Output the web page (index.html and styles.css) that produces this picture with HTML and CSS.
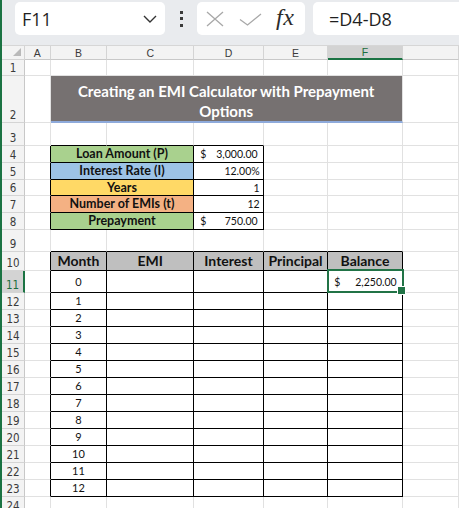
FILE: index.html
```html
<!DOCTYPE html>
<html>
<head>
<meta charset="utf-8">
<link rel="stylesheet" href="styles.css">
</head>
<body>
<div class="app">
  <div class="topbar">
    <div class="namebox">
      <span class="namebox-text">F11</span>
      <svg class="chev" width="14" height="8" viewBox="0 0 14 8"><path d="M1 1 L7 7 L13 1" fill="none" stroke="#333" stroke-width="1.4"/></svg>
    </div>
    <div class="dots"><i></i><i></i><i></i></div>
    <div class="fbtns">
      <svg class="xicon" width="18" height="16" viewBox="0 0 18 16"><path d="M1 1 L17 15 M17 1 L1 15" stroke="#a8a8a8" stroke-width="1.3" fill="none"/></svg>
      <svg class="check" width="23" height="13" viewBox="0 0 23 13"><path d="M1 6.5 L8.5 12 L22 1" stroke="#a8a8a8" stroke-width="1.3" fill="none"/></svg>
      <span class="fx">fx</span>
    </div>
    <div class="formula">=D4-D8</div>
  </div>

  <div class="sheet">
    <!-- column headers -->
    <div class="corner"><svg width="8" height="8" viewBox="0 0 8 8"><path d="M8 0 L8 8 L0 8 Z" fill="#b9b9b9"/></svg></div>
    <div class="ch">A</div>
    <div class="ch">B</div>
    <div class="ch">C</div>
    <div class="ch">D</div>
    <div class="ch">E</div>
    <div class="ch ch-sel">F</div>
    <div class="ch"></div>

    <!-- row 1 -->
    <div class="rh">1</div>
    <div class="c"></div><div class="c"></div><div class="c"></div><div class="c"></div><div class="c"></div><div class="c"></div><div class="c"></div>

    <!-- row 2 -->
    <div class="rh">2</div>
    <div class="c"></div>
    <div class="c title">Creating an EMI Calculator with Prepayment Options</div>
    <div class="c"></div>

    <!-- row 3 -->
    <div class="rh">3</div>
    <div class="c"></div>
    <div class="c bb"></div><div class="c bb"></div><div class="c bb"></div>
    <div class="c"></div><div class="c"></div><div class="c"></div>

    <!-- row 4 -->
    <div class="rh">4</div>
    <div class="c rb"></div>
    <div class="c tb lbl green">Loan Amount (P)</div>
    <div class="c tb val acc"><span>$</span><span>3,000.00</span></div>
    <div class="c"></div><div class="c"></div><div class="c"></div>

    <!-- row 5 -->
    <div class="rh">5</div>
    <div class="c rb"></div>
    <div class="c tb lbl blue">Interest Rate (I)</div>
    <div class="c tb val num">12.00%</div>
    <div class="c"></div><div class="c"></div><div class="c"></div>

    <!-- row 6 -->
    <div class="rh">6</div>
    <div class="c rb"></div>
    <div class="c tb lbl yellow">Years</div>
    <div class="c tb val num">1</div>
    <div class="c"></div><div class="c"></div><div class="c"></div>

    <!-- row 7 -->
    <div class="rh">7</div>
    <div class="c rb"></div>
    <div class="c tb lbl orange">Number of EMIs (t)</div>
    <div class="c tb val num">12</div>
    <div class="c"></div><div class="c"></div><div class="c"></div>

    <!-- row 8 -->
    <div class="rh">8</div>
    <div class="c rb"></div>
    <div class="c tb lbl green">Prepayment</div>
    <div class="c tb val acc"><span>$</span><span>750.00</span></div>
    <div class="c"></div><div class="c"></div><div class="c"></div>

    <!-- row 9 -->
    <div class="rh">9</div>
    <div class="c"></div>
    <div class="c bb"></div><div class="c bb"></div><div class="c bb"></div><div class="c bb"></div><div class="c bb"></div>
    <div class="c"></div>

    <!-- row 10 -->
    <div class="rh">10</div>
    <div class="c rb"></div>
    <div class="c tb hdr">Month</div>
    <div class="c tb hdr">EMI</div>
    <div class="c tb hdr">Interest</div>
    <div class="c tb hdr">Principal</div>
    <div class="c tb hdr">Balance</div>
    <div class="c"></div>

    <!-- row 11 -->
    <div class="rh rh-sel">11</div>
    <div class="c rb"></div>
    <div class="c tb mon">0</div>
    <div class="c tb"></div><div class="c tb"></div><div class="c tb"></div>
    <div class="c tb val acc sel"><span>$</span><span>2,250.00</span></div>
    <div class="c"></div>

    <!-- rows 12-23 -->
    <div class="rh">12</div><div class="c rb"></div><div class="c tb mon">1</div><div class="c tb"></div><div class="c tb"></div><div class="c tb"></div><div class="c tb"></div><div class="c"></div>
    <div class="rh">13</div><div class="c rb"></div><div class="c tb mon">2</div><div class="c tb"></div><div class="c tb"></div><div class="c tb"></div><div class="c tb"></div><div class="c"></div>
    <div class="rh">14</div><div class="c rb"></div><div class="c tb mon">3</div><div class="c tb"></div><div class="c tb"></div><div class="c tb"></div><div class="c tb"></div><div class="c"></div>
    <div class="rh">15</div><div class="c rb"></div><div class="c tb mon">4</div><div class="c tb"></div><div class="c tb"></div><div class="c tb"></div><div class="c tb"></div><div class="c"></div>
    <div class="rh">16</div><div class="c rb"></div><div class="c tb mon">5</div><div class="c tb"></div><div class="c tb"></div><div class="c tb"></div><div class="c tb"></div><div class="c"></div>
    <div class="rh">17</div><div class="c rb"></div><div class="c tb mon">6</div><div class="c tb"></div><div class="c tb"></div><div class="c tb"></div><div class="c tb"></div><div class="c"></div>
    <div class="rh">18</div><div class="c rb"></div><div class="c tb mon">7</div><div class="c tb"></div><div class="c tb"></div><div class="c tb"></div><div class="c tb"></div><div class="c"></div>
    <div class="rh">19</div><div class="c rb"></div><div class="c tb mon">8</div><div class="c tb"></div><div class="c tb"></div><div class="c tb"></div><div class="c tb"></div><div class="c"></div>
    <div class="rh">20</div><div class="c rb"></div><div class="c tb mon">9</div><div class="c tb"></div><div class="c tb"></div><div class="c tb"></div><div class="c tb"></div><div class="c"></div>
    <div class="rh">21</div><div class="c rb"></div><div class="c tb mon">10</div><div class="c tb"></div><div class="c tb"></div><div class="c tb"></div><div class="c tb"></div><div class="c"></div>
    <div class="rh">22</div><div class="c rb"></div><div class="c tb mon">11</div><div class="c tb"></div><div class="c tb"></div><div class="c tb"></div><div class="c tb"></div><div class="c"></div>
    <div class="rh">23</div><div class="c rb"></div><div class="c tb mon">12</div><div class="c tb"></div><div class="c tb"></div><div class="c tb"></div><div class="c tb"></div><div class="c"></div>

    <!-- row 24 -->
    <div class="rh">24</div>
    <div class="c"></div><div class="c"></div><div class="c"></div><div class="c"></div><div class="c"></div><div class="c"></div><div class="c"></div>
  </div>
</div>
</body>
</html>
```

FILE: styles.css
```css
* { box-sizing: border-box; }

html, body {
  margin: 0;
  padding: 0;
  background: #ffffff;
}

body {
  width: 459px;
  height: 508px;
  overflow: hidden;
  font-family: "Lato", "Liberation Sans", sans-serif;
}

.app {
  border-left: 2px solid #1b7343;
  height: 508px;
  overflow: hidden;
}

/* ---------- formula bar ---------- */
.topbar {
  height: 46px;
  background: #e9ebee;
  display: flex;
  align-items: flex-start;
  padding: 2px 0 0 13px;
  border-bottom: 1px solid #d6d6d6;
}

.namebox {
  width: 150px;
  height: 33px;
  background: #ffffff;
  border-radius: 5px;
  display: flex;
  align-items: center;
  justify-content: space-between;
  padding: 0 8px 0 7px;
}

.namebox-text,
.formula {
  font-family: "Open Sans", "Liberation Sans", sans-serif;
  font-size: 18px;
  color: #1f1f1f;
}

.chev { display: block; }

.dots {
  width: 32px;
  height: 33px;
  display: flex;
  flex-direction: column;
  align-items: center;
  justify-content: center;
  gap: 3.5px;
}

.dots i {
  display: block;
  width: 3px;
  height: 3px;
  background: #3a3a3a;
}

.fbtns {
  width: 108px;
  height: 33px;
  background: #ffffff;
  border-radius: 5px;
  display: flex;
  align-items: center;
  padding-left: 9px;
}

.xicon { display: block; margin-right: 15px; }
.check { display: block; margin-right: 14px; margin-top: 1px; }

.fx {
  font-family: "Liberation Serif", "DejaVu Serif", serif;
  font-style: italic;
  font-size: 24px;
  color: #2b2b2b;
  line-height: 1;
  margin-top: -3px;
  letter-spacing: 0.5px;
}

.formula {
  margin-left: 8px;
  flex: 1;
  height: 33px;
  background: #ffffff;
  border-radius: 5px 0 0 5px;
  display: flex;
  align-items: center;
  padding-left: 16px;
  margin-right: -20px;
}

/* ---------- sheet grid ---------- */
.sheet {
  display: grid;
  grid-template-columns: 23px 25.7px 56.6px 87px 69.4px 64.6px 74.4px 1fr;
  grid-template-rows: 14px 16px 47px 23px 17px 17px 16px 17px 17px 22px 19px 22px repeat(13, 17px);
}

.corner {
  background: #f3f3f3;
  border-right: 1px solid #d4d4d4;
  border-bottom: 1px solid #d4d4d4;
  display: flex;
  align-items: flex-end;
  justify-content: flex-end;
  padding: 0 3px 3px 0;
}
.corner svg { display: block; }

.ch {
  background: #f3f3f3;
  border-right: 1px solid #d4d4d4;
  border-bottom: 1px solid #c8c8c8;
  display: flex;
  align-items: center;
  justify-content: center;
  font-family: "Liberation Sans", "Open Sans", sans-serif;
  font-size: 10.5px;
  color: #3b3b3b;
}

.ch-sel {
  background: #d3d3d3;
  color: #1b6e3e;
  border-bottom: 2px solid #1b7343;
}

.rh {
  background: #f3f3f3;
  border-right: 1px solid #c8c8c8;
  border-bottom: 1px solid #d4d4d4;
  display: flex;
  align-items: flex-end;
  justify-content: center;
  font-family: "Liberation Sans Narrow", "DejaVu Sans Condensed", "Liberation Sans", sans-serif;
  font-size: 11.5px;
  line-height: 12px;
  padding-bottom: 1px;
  color: #3b3b3b;
}

.rh-sel {
  background: #d3d3d3;
  color: #1b6e3e;
  border-right: 2px solid #1b7343;
}

.c {
  border-right: 1px solid #e1e1e1;
  border-bottom: 1px solid #e1e1e1;
  display: flex;
  align-items: center;
  min-width: 0;
  font-size: 11px;
  line-height: 14px;
  color: #111111;
}

.bb { border-bottom-color: #000000; }
.rb { border-right-color: #000000; }
.tb {
  border-right-color: #000000;
  border-bottom-color: #000000;
}

.title {
  grid-column: span 5;
  background: #767171;
  border-bottom: 2px solid #8eaadb;
  color: #ffffff;
  font-weight: 700;
  font-size: 15px;
  line-height: 20px;
  justify-content: center;
  text-align: center;
  padding: 4px 8px 0;
}

.lbl {
  grid-column: span 2;
  justify-content: center;
  font-weight: 700;
  font-size: 12.5px;
}
.green { background: #a9d18e; }
.blue { background: #9dc3e6; }
.yellow { background: #ffd966; }
.orange { background: #f4b183; }

.val {
  font-size: 10.5px;
}
.acc {
  justify-content: space-between;
  padding: 0 5px 0 6px;
}
.num {
  justify-content: flex-end;
  padding-right: 3px;
}

.hdr {
  background: #bfbfbf;
  justify-content: center;
  font-weight: 700;
  font-size: 14px;
  line-height: 16px;
}

.mon {
  justify-content: center;
  font-size: 11px;
}

.sel {
  position: relative;
}
.sel::after {
  content: "";
  position: absolute;
  top: -2px;
  left: -1px;
  right: -2px;
  bottom: -1px;
  border: 2px solid #217346;
}
.sel::before {
  content: "";
  position: absolute;
  right: -4px;
  bottom: -3px;
  width: 7px;
  height: 7px;
  background: #217346;
  border: 1px solid #ffffff;
  z-index: 2;
}
```
